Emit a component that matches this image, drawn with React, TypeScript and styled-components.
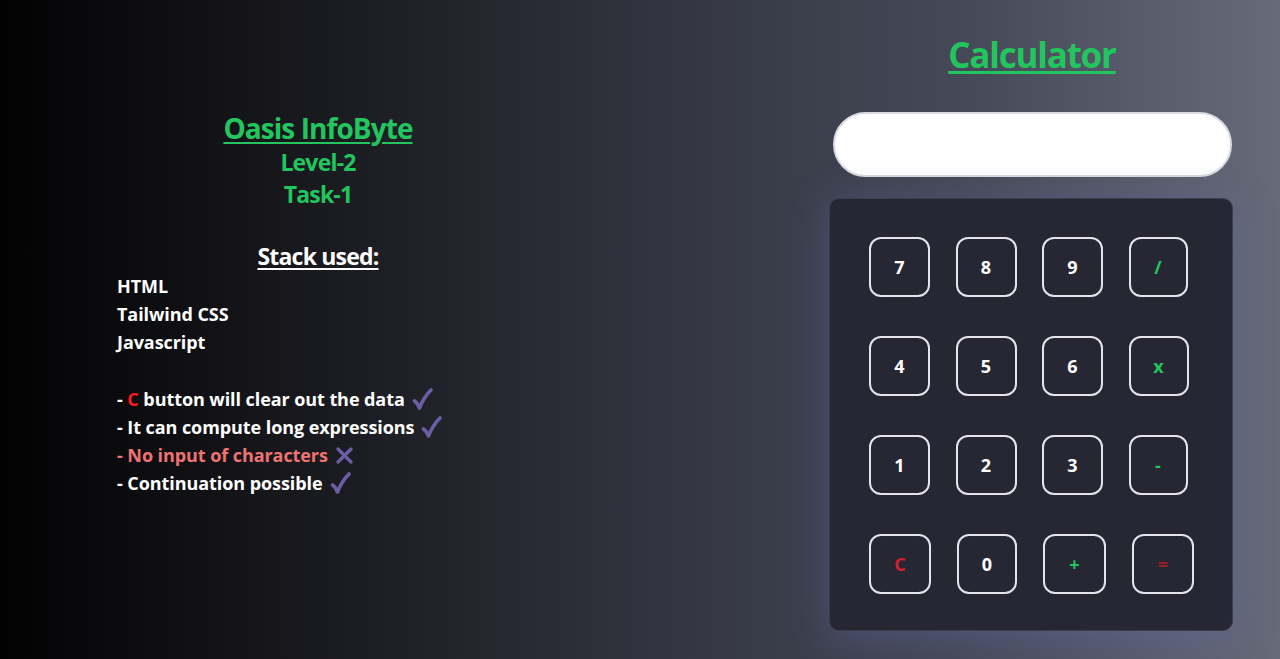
import React from 'react';
import styled, { createGlobalStyle } from 'styled-components';

const GlobalStyle = createGlobalStyle`
  html, body { margin: 0; padding: 0; }
  body {
    font-family: "Open Sans", "Noto Sans", sans-serif;
    background: #000;
  }
  * { box-sizing: border-box; }
`;

const Page = styled.main`
  display: flex;
  align-items: flex-start;
  width: 1280px;
  height: 659px;
  overflow: hidden;
  background: linear-gradient(to right, #020203 0%, #1f2026 31%, #353844 55%, #454957 75%, #666a79 100%);
`;

const InfoColumn = styled.section`
  width: 402px;
  margin-left: 117px;
  padding-top: 110px;
  display: flex;
  flex-direction: column;
`;

const Heading = styled.h1<{ $size: number; $lh: number; $color: string; $underline?: boolean; $mt?: number; $ls?: number }>`
  margin: ${(p) => p.$mt ?? 0}px 0 0;
  text-align: center;
  font-weight: 700;
  font-size: ${(p) => p.$size}px;
  line-height: ${(p) => p.$lh}px;
  letter-spacing: ${(p) => p.$ls ?? -0.035}em;
  color: ${(p) => p.$color};
  text-decoration: ${(p) => (p.$underline ? 'underline' : 'none')};
  text-decoration-thickness: 2px;
  text-underline-offset: 3px;
`;

const Line = styled.div<{ $color?: string }>`
  display: flex;
  align-items: center;
  font-size: 18px;
  line-height: 28px;
  height: 28px;
  font-weight: 700;
  letter-spacing: -0.004em;
  color: ${(p) => p.$color ?? '#ffffff'};
  white-space: pre;
`;

const Spacer = styled.div`
  height: 29px;
`;

const RedC = styled.span`
  color: #ff1a1a;
`;

const Mark = styled.svg`
  margin-left: 7px;
  flex: none;
`;

const CalcColumn = styled.section`
  width: 404px;
  margin-left: 311px;
  padding-top: 35px;
  display: flex;
  flex-direction: column;
  align-items: center;
`;

const CalcTitle = styled.h2`
  margin: 0;
  font-size: 35px;
  line-height: 40px;
  font-weight: 700;
  color: #22c55e;
  letter-spacing: -0.035em;
  text-decoration: underline;
  text-decoration-thickness: 3px;
  text-underline-offset: 3px;
`;

const Display = styled.div`
  margin-top: 37px;
  width: 399px;
  height: 65px;
  border-radius: 33px;
  background: #ffffff;
  border: 2px solid #d9dbe2;
`;

const Pad = styled.div`
  margin-top: 21px;
  margin-left: -2px;
  width: 404px;
  height: 433px;
  border-radius: 10px;
  background: #262733;
  border: 1px solid #3a3d4b;
  box-shadow: 0 6px 40px rgba(96, 104, 170, 0.45);
  padding: 38px 0 0 39px;
  display: flex;
  flex-direction: column;
  gap: 39px;
`;

const KeyRow = styled.div<{ $gap: number }>`
  display: flex;
  gap: ${(p) => p.$gap}px;
`;

const Key = styled.button<{ $w: number; $color: string }>`
  width: ${(p) => p.$w}px;
  height: 60px;
  border-radius: 12px;
  border: 2px solid #e4e4ea;
  background: transparent;
  color: ${(p) => p.$color};
  font-family: "Open Sans", "Noto Sans", sans-serif;
  font-weight: 700;
  font-size: 18px;
  padding: 0;
  display: flex;
  align-items: center;
  justify-content: center;
  cursor: pointer;
`;

const WHITE = '#ffffff';
const GREEN = '#22c55e';
const RED = '#d5202a';
const DARKRED = '#9b1c22';

const rows: { gap: number; keys: { label: string; w: number; color: string }[] }[] = [
  {
    gap: 25.5,
    keys: [
      { label: '7', w: 61, color: WHITE },
      { label: '8', w: 61, color: WHITE },
      { label: '9', w: 61, color: WHITE },
      { label: '/', w: 59, color: GREEN },
    ],
  },
  {
    gap: 25.5,
    keys: [
      { label: '4', w: 61, color: WHITE },
      { label: '5', w: 61, color: WHITE },
      { label: '6', w: 61, color: WHITE },
      { label: 'x', w: 60, color: GREEN },
    ],
  },
  {
    gap: 25.5,
    keys: [
      { label: '1', w: 61, color: WHITE },
      { label: '2', w: 61, color: WHITE },
      { label: '3', w: 61, color: WHITE },
      { label: '-', w: 59, color: GREEN },
    ],
  },
  {
    gap: 26,
    keys: [
      { label: 'C', w: 62, color: RED },
      { label: '0', w: 60, color: WHITE },
      { label: '+', w: 63, color: GREEN },
      { label: '=', w: 62, color: DARKRED },
    ],
  },
];

const Check = () => (
  <Mark width="21" height="22" viewBox="0 0 21 22">
    <path
      d="M2.5 13 Q5.5 15 7.5 20 Q11.5 9.5 19 2"
      fill="none"
      stroke="#6a5ea6"
      strokeWidth="3.6"
      strokeLinecap="round"
      strokeLinejoin="round"
    />
  </Mark>
);

const Cross = () => (
  <Mark width="19" height="19" viewBox="0 0 19 19">
    <path d="M3 3 L16 16 M16 3 L3 16" fill="none" stroke="#6a5ea6" strokeWidth="3.4" strokeLinecap="round" />
  </Mark>
);

export default function App() {
  return (
    <>
      <GlobalStyle />
      <Page>
        <InfoColumn>
          <Heading $size={28} $lh={36} $color="#22c55e" $underline $ls={-0.033}>
            Oasis InfoByte
          </Heading>
          <Heading as="h3" $size={23} $lh={32} $color="#22c55e">
            Level-2
          </Heading>
          <Heading as="h3" $size={23} $lh={32} $color="#22c55e">
            Task-1
          </Heading>
          <Heading as="h3" $size={23} $lh={32} $color="#ffffff" $underline $mt={30}>
            Stack used:
          </Heading>
          <Line>HTML</Line>
          <Line>Tailwind CSS</Line>
          <Line>Javascript</Line>
          <Spacer />
          <Line>
            - <RedC>C</RedC> button will clear out the data
            <Check />
          </Line>
          <Line>
            - It can compute long expressions
            <Check />
          </Line>
          <Line $color="#f07272">
            - No input of characters
            <Cross />
          </Line>
          <Line>
            - Continuation possible
            <Check />
          </Line>
        </InfoColumn>
        <CalcColumn>
          <CalcTitle>Calculator</CalcTitle>
          <Display />
          <Pad>
            {rows.map((row, i) => (
              <KeyRow key={i} $gap={row.gap}>
                {row.keys.map((k) => (
                  <Key key={k.label} $w={k.w} $color={k.color}>
                    {k.label}
                  </Key>
                ))}
              </KeyRow>
            ))}
          </Pad>
        </CalcColumn>
      </Page>
    </>
  );
}
